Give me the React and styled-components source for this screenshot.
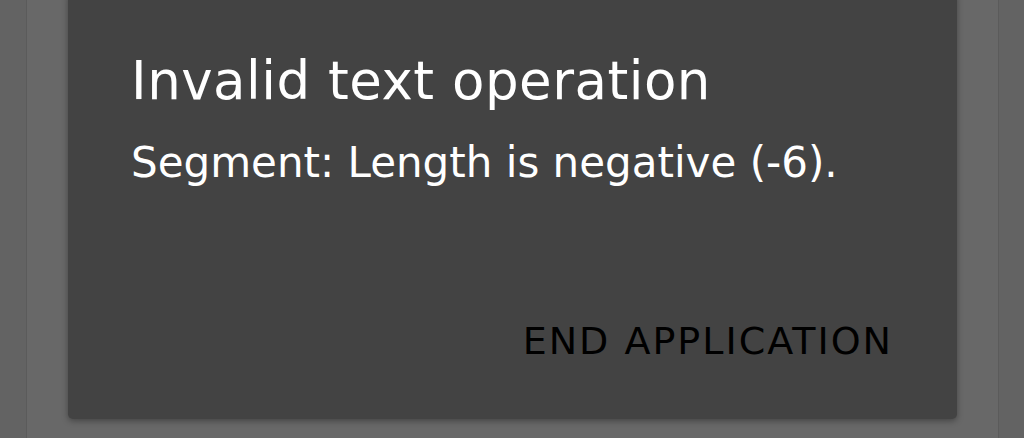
import styled, { createGlobalStyle } from 'styled-components';

const Global = createGlobalStyle`
html, body {
  margin: 0;
  padding: 0;
  background: #636363;
  height: 100%;
  overflow: hidden;
}
#root {
  height: 100%;
}
`

function App() {
    return (
        <>
            <Global />
            <Screen>
                <Column>
                    <Dialog>
                        <Title>Invalid text operation</Title>
                        <Message>Segment: Length is negative (-6).</Message>
                        <Actions>
                            <ActionButton>END APPLICATION</ActionButton>
                        </Actions>
                    </Dialog>
                </Column>
            </Screen>
        </>
    )
}

const Screen = styled.div`
display:flex;
justify-content:center;
height:438px;
padding:0 25px 0 26px;
box-sizing:border-box;
`
const Column = styled.div`
flex:1;
display:flex;
flex-direction:column;
align-items:stretch;
background:#686868;
border-left:1px solid #5b5b5b;
border-right:1px solid #5b5b5b;
padding:0 41px;
`
const Dialog = styled.div`
margin-top:-8px;
height:427px;
box-sizing:border-box;
background:#434343;
border-radius:5px;
box-shadow:0 2px 6px rgba(0,0,0,0.35);
padding:57px 66px 0 63px;
display:flex;
flex-direction:column;
font-family:"DejaVu Sans", sans-serif;
`
const Title = styled.h1`
margin:0;
font-size:53px;
font-weight:400;
line-height:64px;
letter-spacing:0.5px;
color:#ffffff;
white-space:nowrap;
`
const Message = styled.p`
margin:24px 0 0;
font-size:42px;
line-height:52px;
color:#ffffff;
white-space:nowrap;
`
const Actions = styled.div`
margin-top:auto;
margin-bottom:54px;
display:flex;
justify-content:flex-end;
`
const ActionButton = styled.button`
background:none;
border:none;
padding:0;
font-family:"DejaVu Sans", sans-serif;
font-size:38px;
letter-spacing:2px;
margin-right:-2px;
color:#000000;
line-height:48px;
`

export default App;
